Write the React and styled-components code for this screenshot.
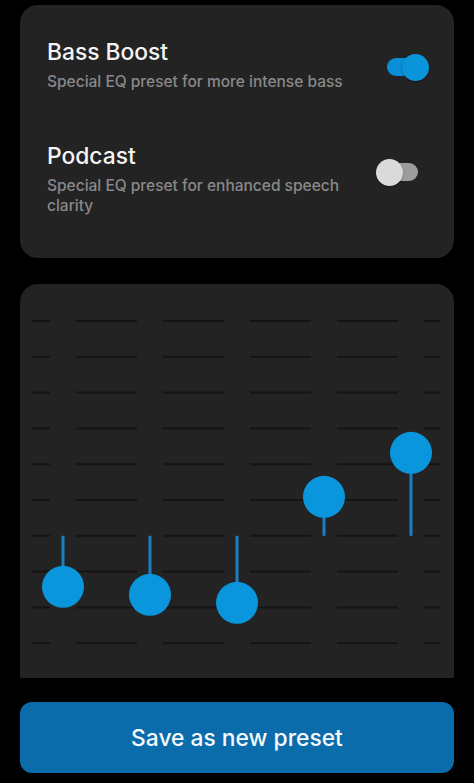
import React, { useState } from "react";
import styled, { createGlobalStyle } from "styled-components";

const GlobalStyle = createGlobalStyle`
  html, body {
    margin: 0;
    padding: 0;
    background: #000;
  }
  body {
    font-family: Inter, "Noto Sans", "Liberation Sans", sans-serif;
    -webkit-font-smoothing: antialiased;
  }
`;

const Page = styled.div`
  width: 474px;
  height: 783px;
  box-sizing: border-box;
  padding: 5px 20px 10px;
  display: flex;
  flex-direction: column;
  background: #000;
`;

const Card = styled.div`
  background: #232323;
  border-radius: 18px;
`;

const PresetCard = styled(Card)`
  height: 253px;
  box-sizing: border-box;
  padding: 33px 25px 0 27px;
  display: flex;
  flex-direction: column;
  gap: 50px;
`;

const PresetRow = styled.div`
  display: flex;
  align-items: flex-start;
  justify-content: space-between;
`;

const PresetText = styled.div`
  max-width: 318px;
`;

const PresetTitle = styled.div`
  color: #f4f4f4;
  font-size: 22.8px;
  line-height: 28px;
  font-weight: 500;
`;

const PresetDesc = styled.div`
  margin-top: 6px;
  color: #898989;
  font-size: 15.5px;
  line-height: 20px;
  font-weight: 500;
`;

const Toggle = styled.button`
  position: relative;
  width: 53px;
  height: 27px;
  margin-top: ${(p) => p.$offset}px;
  padding: 0;
  border: none;
  background: none;
  cursor: pointer;
  flex-shrink: 0;
`;

const Track = styled.span`
  position: absolute;
  left: 11px;
  top: 4px;
  width: 31px;
  height: 18px;
  border-radius: 9px;
  background: ${(p) => (p.$on ? "#0a8ed5" : "#9d9d9d")};
`;

const Thumb = styled.span`
  position: absolute;
  top: 0;
  left: ${(p) => (p.$on ? "26px" : "0")};
  width: 27px;
  height: 27px;
  border-radius: 50%;
  background: ${(p) => (p.$on ? "#0a95db" : "#dadada")};
  box-shadow: 0 1px 2px rgba(0, 0, 0, 0.35);
`;

const EqCard = styled(Card)`
  margin-top: 26px;
  height: 394px;
  border-radius: 18px 18px 0 0;
  overflow: hidden;
`;

const SaveButton = styled.button`
  margin-top: 24px;
  height: 71px;
  border: none;
  border-radius: 12px;
  background: #0b6cab;
  color: #f7f9fb;
  font-family: Inter, "Noto Sans", "Liberation Sans", sans-serif;
  font-size: 22.8px;
  font-weight: 500;
  cursor: pointer;
`;

const PRESETS = [
  { id: "bass", title: "Bass Boost", desc: "Special EQ preset for more intense bass", offset: 16 },
  { id: "podcast", title: "Podcast", desc: "Special EQ preset for enhanced speech clarity", offset: 17 },
];

// knob offset from the zero line, in px (negative = boost)
const BANDS = [51, 59, 67, -39, -83];

const EQ_W = 434;
const EQ_H = 394;
const FIRST_X = 43;
const STEP = 87;
const GAP = 13;
const ZERO_ROW = 6;
const rows = Array.from({ length: 10 }, (_, i) => 37 + i * 35.8);

const Equalizer = ({ bands }) => {
  const centers = bands.map((_, i) => FIRST_X + i * STEP);
  const edges = [12, ...centers, 420];
  const segments = [];
  for (let i = 0; i < edges.length - 1; i++) {
    const start = i === 0 ? edges[0] : edges[i] + GAP;
    const end = i === edges.length - 2 ? edges[i + 1] : edges[i + 1] - GAP;
    segments.push([start, end]);
  }
  const zeroY = rows[ZERO_ROW];

  return (
    <svg width={EQ_W} height={EQ_H} viewBox={`0 0 ${EQ_W} ${EQ_H}`}>
      {rows.map((y, r) =>
        segments.map(([a, b], s) => (
          <line
            key={`${r}-${s}`}
            x1={a}
            x2={b}
            y1={y}
            y2={y}
            stroke={r === ZERO_ROW ? "#0d161d" : "#141414"}
            strokeWidth="2"
          />
        ))
      )}
      {bands.map((v, i) => (
        <g key={i}>
          <line
            x1={centers[i]}
            x2={centers[i]}
            y1={zeroY}
            y2={zeroY + v}
            stroke="#1b80c0"
            strokeWidth="3"
          />
          <circle cx={centers[i]} cy={zeroY + v} r="21" fill="#0996dc" />
        </g>
      ))}
    </svg>
  );
};

const App = () => {
  const [enabled, setEnabled] = useState({ bass: true, podcast: false });

  const toggle = (id) => setEnabled((prev) => ({ ...prev, [id]: !prev[id] }));

  return (
    <>
      <GlobalStyle />
      <Page>
        <PresetCard>
          {PRESETS.map((p) => (
            <PresetRow key={p.id}>
              <PresetText>
                <PresetTitle>{p.title}</PresetTitle>
                <PresetDesc>{p.desc}</PresetDesc>
              </PresetText>
              <Toggle $offset={p.offset} onClick={() => toggle(p.id)} aria-label={p.title}>
                <Track $on={enabled[p.id]} />
                <Thumb $on={enabled[p.id]} />
              </Toggle>
            </PresetRow>
          ))}
        </PresetCard>

        <EqCard>
          <Equalizer bands={BANDS} />
        </EqCard>

        <SaveButton>Save as new preset</SaveButton>
      </Page>
    </>
  );
};

export default App;
